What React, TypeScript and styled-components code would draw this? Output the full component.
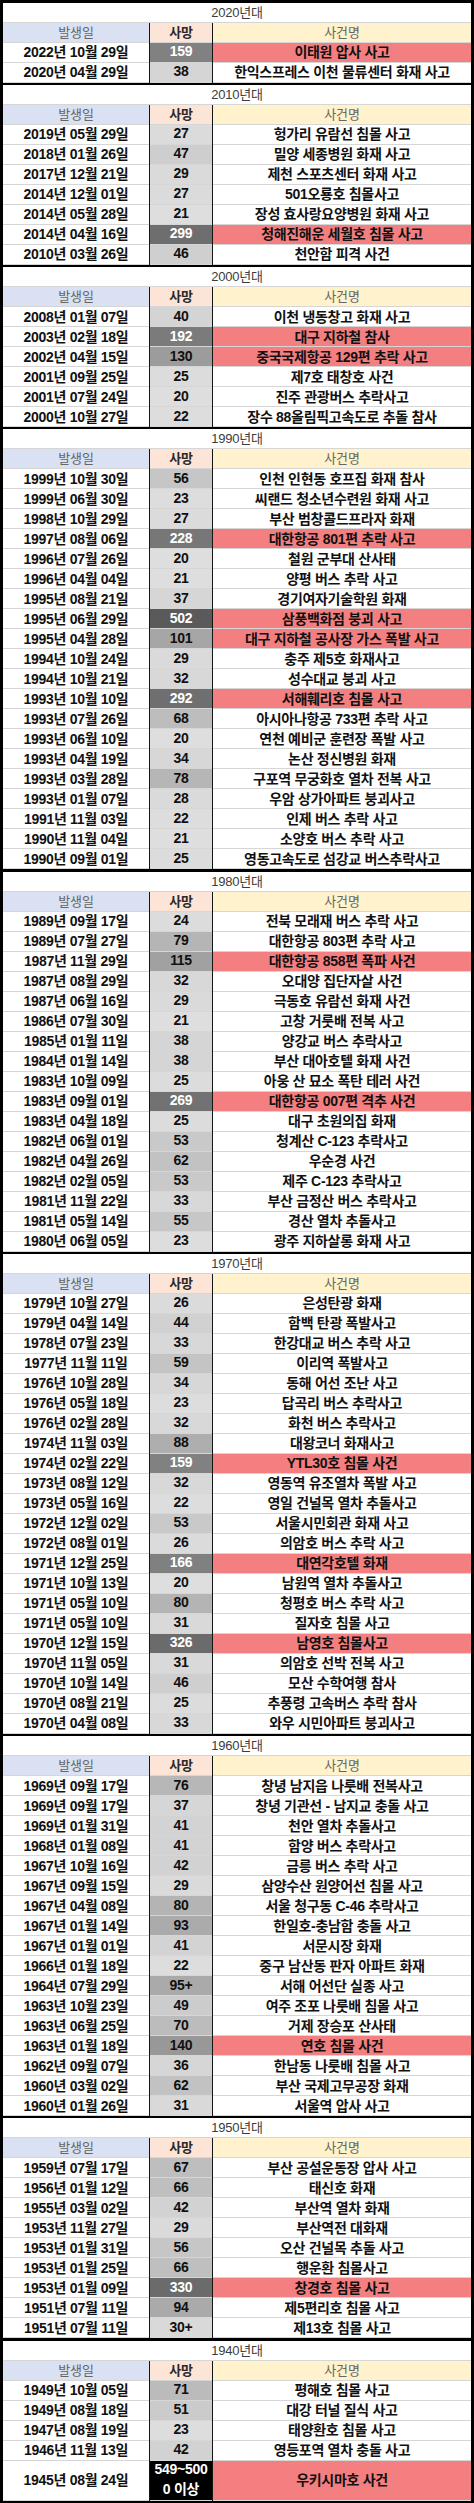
import React from "react";
import styled, { createGlobalStyle } from "styled-components";

type Row = [string, string, string];

interface Decade {
  title: string;
  rows: Row[];
}

const DATA: Decade[] = [
  {
    title: "2020년대",
    rows: [
      ["2022년 10월 29일", "159", "이태원 압사 사고"],
      ["2020년 04월 29일", "38", "한익스프레스 이천 물류센터 화재 사고"],
    ],
  },
  {
    title: "2010년대",
    rows: [
      ["2019년 05월 29일", "27", "헝가리 유람선 침몰 사고"],
      ["2018년 01월 26일", "47", "밀양 세종병원 화재 사고"],
      ["2017년 12월 21일", "29", "제천 스포츠센터 화재 사고"],
      ["2014년 12월 01일", "27", "501오룡호 침몰사고"],
      ["2014년 05월 28일", "21", "장성 효사랑요양병원 화재 사고"],
      ["2014년 04월 16일", "299", "청해진해운 세월호 침몰 사고"],
      ["2010년 03월 26일", "46", "천안함 피격 사건"],
    ],
  },
  {
    title: "2000년대",
    rows: [
      ["2008년 01월 07일", "40", "이천 냉동창고 화재 사고"],
      ["2003년 02월 18일", "192", "대구 지하철 참사"],
      ["2002년 04월 15일", "130", "중국국제항공 129편 추락 사고"],
      ["2001년 09월 25일", "25", "제7호 태창호 사건"],
      ["2001년 07월 24일", "20", "진주 관광버스 추락사고"],
      ["2000년 10월 27일", "22", "장수 88올림픽고속도로 추돌 참사"],
    ],
  },
  {
    title: "1990년대",
    rows: [
      ["1999년 10월 30일", "56", "인천 인현동 호프집 화재 참사"],
      ["1999년 06월 30일", "23", "씨랜드 청소년수련원 화재 사고"],
      ["1998년 10월 29일", "27", "부산 범창콜드프라자 화재"],
      ["1997년 08월 06일", "228", "대한항공 801편 추락 사고"],
      ["1996년 07월 26일", "20", "철원 군부대 산사태"],
      ["1996년 04월 04일", "21", "양평 버스 추락 사고"],
      ["1995년 08월 21일", "37", "경기여자기술학원 화재"],
      ["1995년 06월 29일", "502", "삼풍백화점 붕괴 사고"],
      ["1995년 04월 28일", "101", "대구 지하철 공사장 가스 폭발 사고"],
      ["1994년 10월 24일", "29", "충주 제5호 화재사고"],
      ["1994년 10월 21일", "32", "성수대교 붕괴 사고"],
      ["1993년 10월 10일", "292", "서해훼리호 침몰 사고"],
      ["1993년 07월 26일", "68", "아시아나항공 733편 추락 사고"],
      ["1993년 06월 10일", "20", "연천 예비군 훈련장 폭발 사고"],
      ["1993년 04월 19일", "34", "논산 정신병원 화재"],
      ["1993년 03월 28일", "78", "구포역 무궁화호 열차 전복 사고"],
      ["1993년 01월 07일", "28", "우암 상가아파트 붕괴사고"],
      ["1991년 11월 03일", "22", "인제 버스 추락 사고"],
      ["1990년 11월 04일", "21", "소양호 버스 추락 사고"],
      ["1990년 09월 01일", "25", "영동고속도로 섬강교 버스추락사고"],
    ],
  },
  {
    title: "1980년대",
    rows: [
      ["1989년 09월 17일", "24", "전북 모래재 버스 추락 사고"],
      ["1989년 07월 27일", "79", "대한항공 803편 추락 사고"],
      ["1987년 11월 29일", "115", "대한항공 858편 폭파 사건"],
      ["1987년 08월 29일", "32", "오대양 집단자살 사건"],
      ["1987년 06월 16일", "29", "극동호 유람선 화재 사건"],
      ["1986년 07월 30일", "21", "고창 거룻배 전복 사고"],
      ["1985년 01월 11일", "38", "양강교 버스 추락사고"],
      ["1984년 01월 14일", "38", "부산 대아호텔 화재 사건"],
      ["1983년 10월 09일", "25", "아웅 산 묘소 폭탄 테러 사건"],
      ["1983년 09월 01일", "269", "대한항공 007편 격추 사건"],
      ["1983년 04월 18일", "25", "대구 초원의집 화재"],
      ["1982년 06월 01일", "53", "청계산 C-123 추락사고"],
      ["1982년 04월 26일", "62", "우순경 사건"],
      ["1982년 02월 05일", "53", "제주 C-123 추락사고"],
      ["1981년 11월 22일", "33", "부산 금정산 버스 추락사고"],
      ["1981년 05월 14일", "55", "경산 열차 추돌사고"],
      ["1980년 06월 05일", "23", "광주 지하살롱 화재 사고"],
    ],
  },
  {
    title: "1970년대",
    rows: [
      ["1979년 10월 27일", "26", "은성탄광 화재"],
      ["1979년 04월 14일", "44", "함백 탄광 폭발사고"],
      ["1978년 07월 23일", "33", "한강대교 버스 추락 사고"],
      ["1977년 11월 11일", "59", "이리역 폭발사고"],
      ["1976년 10월 28일", "34", "동해 어선 조난 사고"],
      ["1976년 05월 18일", "23", "답곡리 버스 추락사고"],
      ["1976년 02월 28일", "32", "화천 버스 추락사고"],
      ["1974년 11월 03일", "88", "대왕코너 화재사고"],
      ["1974년 02월 22일", "159", "YTL30호 침몰 사건"],
      ["1973년 08월 12일", "32", "영동역 유조열차 폭발 사고"],
      ["1973년 05월 16일", "22", "영일 건널목 열차 추돌사고"],
      ["1972년 12월 02일", "53", "서울시민회관 화재 사고"],
      ["1972년 08월 01일", "26", "의암호 버스 추락 사고"],
      ["1971년 12월 25일", "166", "대연각호텔 화재"],
      ["1971년 10월 13일", "20", "남원역 열차 추돌사고"],
      ["1971년 05월 10일", "80", "청평호 버스 추락 사고"],
      ["1971년 05월 10일", "31", "질자호 침몰 사고"],
      ["1970년 12월 15일", "326", "남영호 침몰사고"],
      ["1970년 11월 05일", "31", "의암호 선박 전복 사고"],
      ["1970년 10월 14일", "46", "모산 수학여행 참사"],
      ["1970년 08월 21일", "25", "추풍령 고속버스 추락 참사"],
      ["1970년 04월 08일", "33", "와우 시민아파트 붕괴사고"],
    ],
  },
  {
    title: "1960년대",
    rows: [
      ["1969년 09월 17일", "76", "창녕 남지읍 나룻배 전복사고"],
      ["1969년 09월 17일", "37", "창녕 기관선 - 남지교 충돌 사고"],
      ["1969년 01월 31일", "41", "천안 열차 추돌사고"],
      ["1968년 01월 08일", "41", "함양 버스 추락사고"],
      ["1967년 10월 16일", "42", "금릉 버스 추락 사고"],
      ["1967년 09월 15일", "29", "삼양수산 원양어선 침몰 사고"],
      ["1967년 04월 08일", "80", "서울 청구동 C-46 추락사고"],
      ["1967년 01월 14일", "93", "한일호-충남함 충돌 사고"],
      ["1967년 01월 01일", "41", "서문시장 화재"],
      ["1966년 01월 18일", "22", "중구 남산동 판자 아파트 화재"],
      ["1964년 07월 29일", "95+", "서해 어선단 실종 사고"],
      ["1963년 10월 23일", "49", "여주 조포 나룻배 침몰 사고"],
      ["1963년 06월 25일", "70", "거제 장승포 산사태"],
      ["1963년 01월 18일", "140", "연호 침몰 사건"],
      ["1962년 09월 07일", "36", "한남동 나룻배 침몰 사고"],
      ["1960년 03월 02일", "62", "부산 국제고무공장 화재"],
      ["1960년 01월 26일", "31", "서울역 압사 사고"],
    ],
  },
  {
    title: "1950년대",
    rows: [
      ["1959년 07월 17일", "67", "부산 공설운동장 압사 사고"],
      ["1956년 01월 12일", "66", "태신호 화재"],
      ["1955년 03월 02일", "42", "부산역 열차 화재"],
      ["1953년 11월 27일", "29", "부산역전 대화재"],
      ["1953년 01월 31일", "56", "오산 건널목 추돌 사고"],
      ["1953년 01월 25일", "66", "행운환 침몰사고"],
      ["1953년 01월 09일", "330", "창경호 침몰 사고"],
      ["1951년 07월 11일", "94", "제5편리호 침몰 사고"],
      ["1951년 07월 11일", "30+", "제13호 침몰 사고"],
    ],
  },
  {
    title: "1940년대",
    rows: [
      ["1949년 10월 05일", "71", "평해호 침몰 사고"],
      ["1949년 08월 18일", "51", "대강 터널 질식 사고"],
      ["1947년 08월 19일", "23", "태양환호 침몰 사고"],
      ["1946년 11월 13일", "42", "영등포역 열차 충돌 사고"],
      ["1945년 08월 24일", "549~5000 이상", "우키시마호 사건"],
    ],
  },
];

// 사망자 수 -> 회색 농도 (엑셀 색조 비슷하게)
const anchors: [number, number][] = [
  [20, 222],
  [40, 212],
  [60, 195],
  [80, 180],
  [100, 166],
  [140, 152],
  [155, 130],
  [200, 122],
  [300, 110],
  [502, 90],
];

const shade = (v: number) => {
  if (v <= anchors[0][0]) return anchors[0][1];
  for (let i = 1; i < anchors.length; i++) {
    const [x1, y1] = anchors[i];
    const [x0, y0] = anchors[i - 1];
    if (v <= x1) return Math.round(y0 + ((v - x0) / (x1 - x0)) * (y1 - y0));
  }
  return anchors[anchors.length - 1][1];
};

const GlobalStyle = createGlobalStyle`
  html, body {
    margin: 0;
    padding: 0;
    background: #000;
  }
  #root {
    width: 474px;
  }
`;

const Sheet = styled.div`
  background: #000;
  padding: 2.5px 3px;
  display: flex;
  flex-direction: column;
  gap: 2.25px;
  font-family: "Liberation Sans", "Noto Sans CJK KR", sans-serif;
`;

const Block = styled.div`
  display: grid;
  grid-template-columns: 146px 62px 1fr;
  column-gap: 1px;
  background: #151515;
`;

const Cell = styled.div<{ $tall?: boolean }>`
  box-sizing: border-box;
  height: ${(p) => (p.$tall ? 40 : 20)}px;
  border-bottom: 1px solid #d6d6d6;
  display: flex;
  align-items: center;
  justify-content: center;
  text-align: center;
  line-height: 1;
  font-size: 14px;
  white-space: nowrap;
`;

const DecadeTitle = styled(Cell)`
  grid-column: 1 / -1;
  background: #fff;
  color: #3c3c3c;
  font-weight: 400;
  font-size: 13px;
  letter-spacing: -0.2px;
`;

const headBg = {
  date: "#d9e1f2",
  death: "#fce4d6",
  name: "#fff2cc",
};

const HeadCell = styled(Cell)<{ $kind: keyof typeof headBg }>`
  background: ${(p) => headBg[p.$kind]};
  color: ${(p) => (p.$kind === "death" ? "#2a2a2a" : "#666")};
  font-weight: ${(p) => (p.$kind === "death" ? 700 : 400)};
  font-size: 13px;
  letter-spacing: -0.2px;
`;

const DateCell = styled(Cell)`
  background: #fff;
  color: #111;
  font-weight: 700;
  letter-spacing: -0.3px;
`;

const DeathCell = styled(Cell)<{ $bg: string; $fg: string }>`
  background: ${(p) => p.$bg};
  color: ${(p) => p.$fg};
  font-weight: 700;
  letter-spacing: -0.3px;
  line-height: 1.4;
  white-space: normal;
`;

const NameCell = styled(Cell)<{ $hot: boolean }>`
  background: ${(p) => (p.$hot ? "#f47f80" : "#fff")};
  color: #111;
  font-weight: 700;
  letter-spacing: -0.3px;
`;

const DeathValue = ({ value, tall }: { value: string; tall: boolean }) => {
  const n = parseInt(value, 10);
  if (tall) {
    return (
      <DeathCell $tall $bg="#000" $fg="#fff">
        549~500
        <br />0 이상
      </DeathCell>
    );
  }
  const g = shade(n);
  return (
    <DeathCell $bg={`rgb(${g},${g},${g})`} $fg={n >= 150 ? "#fff" : "#111"}>
      {value}
    </DeathCell>
  );
};

const DecadeTable = ({ decade }: { decade: Decade }) => (
  <Block>
    <DecadeTitle>{decade.title}</DecadeTitle>
    <HeadCell $kind="date">발생일</HeadCell>
    <HeadCell $kind="death">사망</HeadCell>
    <HeadCell $kind="name">사건명</HeadCell>
    {decade.rows.map(([date, death, name], i) => {
      const tall = death.includes("이상");
      const hot = tall || parseInt(death, 10) >= 100;
      return (
        <React.Fragment key={i}>
          <DateCell $tall={tall}>{date}</DateCell>
          <DeathValue value={death} tall={tall} />
          <NameCell $tall={tall} $hot={hot}>
            {name}
          </NameCell>
        </React.Fragment>
      );
    })}
  </Block>
);

export default function App() {
  return (
    <>
      <GlobalStyle />
      <Sheet>
        {DATA.map((d) => (
          <DecadeTable key={d.title} decade={d} />
        ))}
      </Sheet>
    </>
  );
}
